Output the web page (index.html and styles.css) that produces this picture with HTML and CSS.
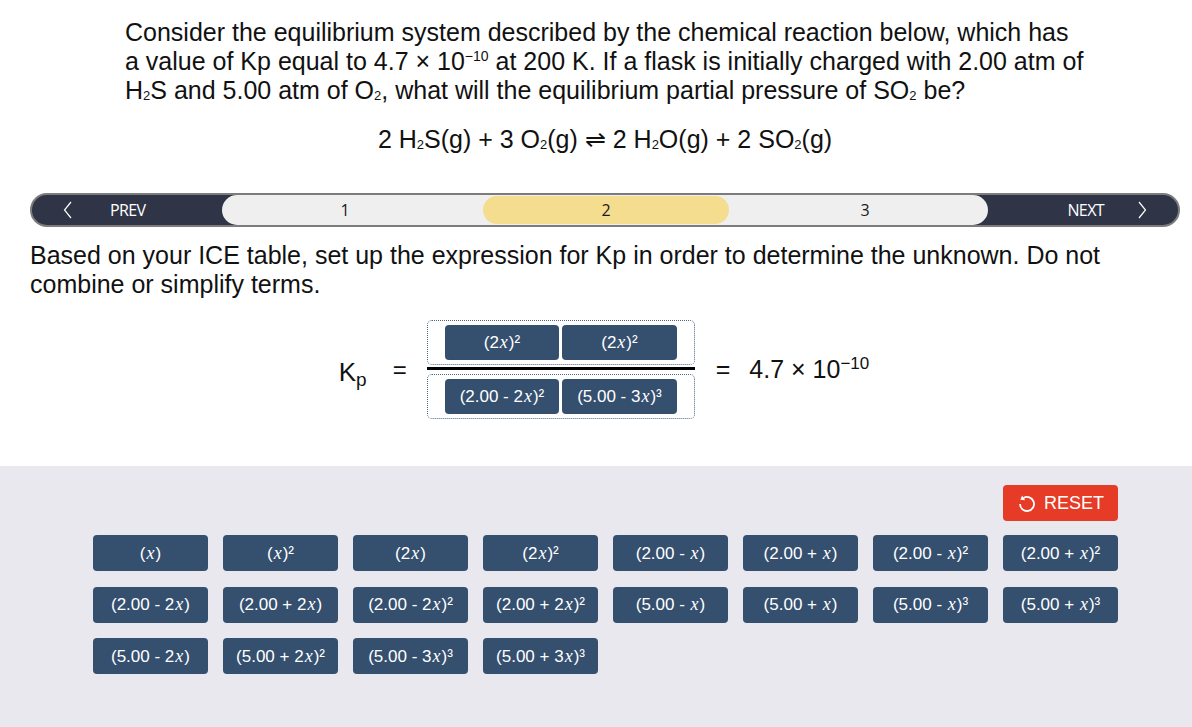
FILE: index.html
```html
<!DOCTYPE html>
<html>
<head>
<meta charset="utf-8">
<link rel="stylesheet" href="styles.css">
</head>
<body>
<div class="page">
  <div class="question">
    <p class="q">Consider the equilibrium system described by the chemical reaction below, which has<br>a value of Kp equal to 4.7 × 10<span class="sup">−10</span> at 200 K. If a flask is initially charged with 2.00 atm of<br>H<span class="sub">2</span>S and 5.00 atm of O<span class="sub">2</span>, what will the equilibrium partial pressure of SO<span class="sub">2</span> be?</p>
    <p class="eq">2 H<span class="sub">2</span>S(g) + 3 O<span class="sub">2</span>(g) ⇌ 2 H<span class="sub">2</span>O(g) + 2 SO<span class="sub">2</span>(g)</p>
  </div>

  <div class="nav">
    <div class="prev">
      <svg class="chev" width="9" height="18" viewBox="0 0 9 18"><polyline points="8,1 1.5,9 8,17"/></svg>
      <span class="navlabel">PREV</span>
    </div>
    <div class="track">
      <div class="seg seg1">1</div>
      <div class="seg seg2"><span class="pill">2</span></div>
      <div class="seg seg3">3</div>
    </div>
    <div class="next">
      <span class="navlabel">NEXT</span>
      <svg class="chev" width="9" height="18" viewBox="0 0 9 18"><polyline points="1,1 7.5,9 1,17"/></svg>
    </div>
  </div>

  <p class="prompt">Based on your ICE table, set up the expression for Kp in order to determine the unknown. Do not<br>combine or simplify terms.</p>

  <div class="expr">
    <div class="kp">K<span class="kpsub">p</span></div>
    <div class="eqsign">=</div>
    <div class="frac">
      <div class="slot">
        <div class="tile small"><span>(2<i class="x">x</i>)²</span></div>
        <div class="tile small"><span>(2<i class="x">x</i>)²</span></div>
      </div>
      <div class="bar"></div>
      <div class="slot">
        <div class="tile small"><span>(2.00 - 2<i class="x">x</i>)²</span></div>
        <div class="tile small"><span>(5.00 - 3<i class="x">x</i>)³</span></div>
      </div>
    </div>
    <div class="rhs"><span class="rhs-eq">=</span>4.7 × 10<span class="rsup">−10</span></div>
  </div>
</div>

<div class="bank">
  <div class="bank-inner">
    <div class="reset-row">
      <div class="reset">
        <svg width="20" height="20" viewBox="0 0 20 20"><path d="M6.5 4.94 A7 7 0 1 1 3 11" fill="none" stroke="#fff" stroke-width="1.8"/><polygon points="3.4,6.7 8.1,7.3 5.1,2.4" fill="#fff"/></svg>
        <span>RESET</span>
      </div>
    </div>
    <div class="tiles">
      <div class="tile"><span>(<i class="x">x</i>)</span></div>
      <div class="tile"><span>(<i class="x">x</i>)²</span></div>
      <div class="tile"><span>(2<i class="x">x</i>)</span></div>
      <div class="tile"><span>(2<i class="x">x</i>)²</span></div>
      <div class="tile"><span>(2.00 - <i class="x">x</i>)</span></div>
      <div class="tile"><span>(2.00 + <i class="x">x</i>)</span></div>
      <div class="tile"><span>(2.00 - <i class="x">x</i>)²</span></div>
      <div class="tile"><span>(2.00 + <i class="x">x</i>)²</span></div>

      <div class="tile"><span>(2.00 - 2<i class="x">x</i>)</span></div>
      <div class="tile"><span>(2.00 + 2<i class="x">x</i>)</span></div>
      <div class="tile"><span>(2.00 - 2<i class="x">x</i>)²</span></div>
      <div class="tile"><span>(2.00 + 2<i class="x">x</i>)²</span></div>
      <div class="tile"><span>(5.00 - <i class="x">x</i>)</span></div>
      <div class="tile"><span>(5.00 + <i class="x">x</i>)</span></div>
      <div class="tile"><span>(5.00 - <i class="x">x</i>)³</span></div>
      <div class="tile"><span>(5.00 + <i class="x">x</i>)³</span></div>

      <div class="tile"><span>(5.00 - 2<i class="x">x</i>)</span></div>
      <div class="tile"><span>(5.00 + 2<i class="x">x</i>)²</span></div>
      <div class="tile"><span>(5.00 - 3<i class="x">x</i>)³</span></div>
      <div class="tile"><span>(5.00 + 3<i class="x">x</i>)³</span></div>
    </div>
  </div>
</div>
</body>
</html>
```

FILE: styles.css
```css
html, body {
  margin: 0;
  padding: 0;
  background: #fff;
}

body {
  font-family: "Liberation Sans", Arial, sans-serif;
  color: #111;
}

.page {
  width: 1150px;
  margin-left: 30px;
  padding-top: 18px;
}

.question {
  padding: 0 95px;
  font-size: 25px;
}

.q {
  margin: 0;
  line-height: 28.75px;
}

.eq {
  margin: 21px 0 0;
  line-height: 28.75px;
  text-align: center;
}

.sub {
  font-size: 13px;
  line-height: 0;
  vertical-align: -1px;
}

.sup {
  font-size: 14px;
  line-height: 0;
  vertical-align: 9px;
}

/* navigation bar */
.nav {
  margin-top: 39px;
  height: 34px;
  box-sizing: border-box;
  display: flex;
  background: #2f3546;
  border: 2px solid #7c7c7c;
  border-radius: 17px;
  font-family: "Open Sans", "Noto Sans", sans-serif;
  font-size: 16px;
}

.prev, .next {
  width: 190px;
  display: flex;
  align-items: center;
  color: #fff;
}

.prev {
  padding-left: 31px;
  box-sizing: border-box;
}

.prev .navlabel {
  margin-left: 38px;
}

.next {
  justify-content: flex-end;
  padding-right: 31px;
  box-sizing: border-box;
}

.next .navlabel {
  margin-right: 34px;
}

.navlabel {
  letter-spacing: -0.6px;
}

.chev polyline {
  fill: none;
  stroke: #fff;
  stroke-width: 1.2;
}

.track {
  flex: 1;
  display: flex;
  background: #efefef;
  border-radius: 15px;
  color: #1a1a1a;
}

.seg {
  flex: 1;
  display: flex;
  align-items: center;
  justify-content: center;
}

.seg1 {
  padding-right: 10px;
}

.seg3 {
  padding-left: 8px;
}

.seg2 {
  padding: 1px 5px;
}

.pill {
  flex: 1;
  align-self: stretch;
  display: flex;
  align-items: center;
  justify-content: center;
  background: #f5dd90;
  border-radius: 14px;
}

/* prompt */
.prompt {
  margin: 14px 0 0;
  font-size: 25px;
  line-height: 29px;
}

/* expression */
.expr {
  margin-top: 21px;
  display: flex;
  align-items: center;
  justify-content: center;
  padding-right: 2px;
}

.kp {
  font-size: 26px;
  margin-right: 26px;
  padding-top: 6px;
}

.kpsub {
  font-size: 19px;
  line-height: 0;
  vertical-align: -5px;
}

.eqsign {
  font-size: 24px;
  margin-right: 20px;
}

.frac {
  width: 268px;
  display: flex;
  flex-direction: column;
}

.slot {
  border: 1px dotted #4d6687;
  border-radius: 5px;
  padding: 4px 17px;
  display: flex;
  gap: 3px;
}

.bar {
  height: 3px;
  background: #000;
  margin: 2px 0 4px;
}

.rhs {
  margin-left: 21px;
  font-size: 25px;
}

.rhs-eq {
  margin-right: 19px;
}

.rsup {
  font-size: 17px;
  line-height: 0;
  vertical-align: 9px;
}

/* tiles */
.tile {
  width: 115px;
  height: 36px;
  box-sizing: border-box;
  display: flex;
  align-items: center;
  justify-content: center;
  background: #354f6f;
  color: #fff;
  border-radius: 4px;
  font-size: 17px;
  white-space: nowrap;
}

.tile.small {
  height: 35px;
}

.x {
  font-family: "Liberation Serif", "Times New Roman", serif;
  font-style: italic;
  font-size: 18px;
  margin: 0 1px;
}

/* bank */
.bank {
  margin-top: 47px;
  height: 261px;
  box-sizing: border-box;
  padding-top: 19px;
  background: #e9e8ee;
}

.bank-inner {
  width: 1025px;
  margin-left: 93px;
}

.reset-row {
  display: flex;
  justify-content: flex-end;
}

.reset {
  width: 115px;
  height: 36px;
  display: flex;
  align-items: center;
  justify-content: center;
  gap: 7px;
  background: #e53b27;
  color: #fff;
  border-radius: 4px;
  font-size: 18px;
}

.tiles {
  margin-top: 14px;
  display: grid;
  grid-template-columns: repeat(8, 115px);
  column-gap: 15px;
  row-gap: 15.5px;
}
```
